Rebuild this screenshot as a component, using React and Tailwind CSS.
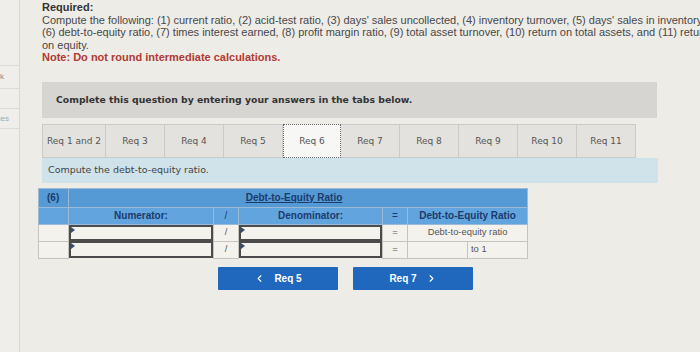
import { ChevronLeft, ChevronRight } from 'lucide-react';

const tabs = ['Req 1 and 2', 'Req 3', 'Req 4', 'Req 5', 'Req 6', 'Req 7', 'Req 8', 'Req 9', 'Req 10', 'Req 11'];

function InputBox() {
    return (
        <div className="relative h-full border-2 border-[#4b4b4b] bg-[#f4f2ed]">
            {/* little marker in the corner */}
            <span className="absolute left-0 top-0 w-0 h-0 border-t-[3px] border-b-[3px] border-l-[4px] border-t-transparent border-b-transparent border-l-[#2b4f85]" />
        </div>
    );
}

export default function App() {
    return (
        <div className="w-[700px] h-[352px] overflow-hidden flex bg-[#eeece7] text-[#333] font-['Liberation_Sans',Arial,sans-serif]">
            {/* Sidebar sliver */}
            <aside className="w-[20px] shrink-0 border-r border-[#d9d7d2] bg-[#efeeea] pt-[65px] flex flex-col">
                <div className="h-[24px] border-y border-[#dddbd6] flex items-center justify-end overflow-hidden text-[8px] text-[#888] whitespace-nowrap pr-[15px]">eBook</div>
                <div className="h-[19px]" />
                <div className="h-[21px] border-y border-[#dddbd6] flex items-center justify-end overflow-hidden text-[8px] text-[#9aa] whitespace-nowrap pr-[10px]">References</div>
            </aside>

            <main className="flex-1 min-w-0 pl-[22px]">
                {/* Instructions */}
                <div className="text-[11px] leading-[12.5px] whitespace-nowrap pt-[1px]">
                    <p className="font-bold">Required:</p>
                    <p className="text-[#484848]">Compute the following: (1) current ratio, (2) acid-test ratio, (3) days' sales uncollected, (4) inventory turnover, (5) days' sales in inventory,</p>
                    <p className="text-[#484848]">(6) debt-to-equity ratio, (7) times interest earned, (8) profit margin ratio, (9) total asset turnover, (10) return on total assets, and (11) return</p>
                    <p className="text-[#484848]">on equity.</p>
                    <p className="font-bold text-[#b03a33]">Note: Do not round intermediate calculations.</p>
                </div>

                {/* Banner */}
                <div className="mt-[18px] w-[615px] h-[36px] bg-[#d6d5d2] flex items-center pl-[14px]">
                    <span className="font-['DejaVu_Sans',sans-serif] font-bold text-[9.3px] text-[#333]">
                        Complete this question by entering your answers in the tabs below.
                    </span>
                </div>

                {/* Tabs */}
                <div className="mt-[6px] flex h-[34px] pt-[2px] font-['DejaVu_Sans',sans-serif] text-[9px] text-[#555]">
                    {tabs.map((t, i) => (
                        <div
                            key={t}
                            className={
                                i === 4
                                    ? 'w-[58px] -mt-[2px] flex items-center justify-center bg-[#f7f7f5] border border-dotted border-[#666]'
                                    : i === 0
                                    ? 'w-[64px] -mt-[2px] flex items-center justify-center bg-[#e3e2de] border border-[#cbcac6]'
                                    : 'w-[59px] -mt-[2px] flex items-center justify-center bg-[#e3e2de] border border-[#cbcac6] border-l-0'
                            }
                        >
                            <span className="pt-[2px]">{t}</span>
                        </div>
                    ))}
                </div>

                {/* Prompt */}
                <div className="w-[616px] h-[25px] bg-[#d0e2ea] flex items-center pl-[6px] font-['DejaVu_Sans',sans-serif] text-[9.5px] text-[#444]">
                    Compute the debt-to-equity ratio.
                </div>

                {/* Ratio table */}
                <table className="mt-[5px] -ml-[4px] border-collapse table-fixed text-[9.4px] font-['Liberation_Sans',Arial,sans-serif]">
                    <colgroup>
                        <col className="w-[30px]" />
                        <col className="w-[145px]" />
                        <col className="w-[25px]" />
                        <col className="w-[144px]" />
                        <col className="w-[25px]" />
                        <col className="w-[60px]" />
                        <col className="w-[60px]" />
                    </colgroup>
                    <tbody>
                        <tr className="h-[19px] bg-[#5599d5] text-[#1b3b6c] font-bold text-[10px]">
                            <td className="border border-[#9cbad5] pl-[8px]">(6)</td>
                            <td colSpan={6} className="border border-[#9cbad5] text-center pr-[8px]">
                                <span className="underline">Debt-to-Equity Ratio</span>
                            </td>
                        </tr>
                        <tr className="h-[17px] bg-[#62a4de] text-[#1b3b6c] font-bold text-center text-[10px]">
                            <td className="border border-[#9cbad5]" />
                            <td className="border border-[#9cbad5]">Numerator:</td>
                            <td className="border border-[#9cbad5] font-normal">/</td>
                            <td className="border border-[#9cbad5]">Denominator:</td>
                            <td className="border border-[#9cbad5] font-normal">=</td>
                            <td colSpan={2} className="border border-[#9cbad5]">Debt-to-Equity Ratio</td>
                        </tr>
                        <tr className="h-[17px] bg-[#f4f2ed] text-[#555] text-center">
                            <td className="border border-[#c6c4bf]" />
                            <td className="p-0 h-[17px]"><InputBox /></td>
                            <td className="border border-[#c6c4bf]">/</td>
                            <td className="p-0 h-[17px]"><InputBox /></td>
                            <td className="border border-[#c6c4bf]">=</td>
                            <td colSpan={2} className="border border-[#c6c4bf]">Debt-to-equity ratio</td>
                        </tr>
                        <tr className="h-[17px] bg-[#f4f2ed] text-[#555] text-center">
                            <td className="border border-[#c6c4bf]" />
                            <td className="p-0 h-[17px]"><InputBox /></td>
                            <td className="border border-[#c6c4bf]">/</td>
                            <td className="p-0 h-[17px]"><InputBox /></td>
                            <td className="border border-[#c6c4bf]">=</td>
                            <td className="border border-[#c6c4bf]" />
                            <td className="border border-[#c6c4bf] text-left pl-[3px]">to 1</td>
                        </tr>
                    </tbody>
                </table>

                {/* Navigation */}
                <div className="mt-[8px] ml-[176px] flex gap-[15px] font-bold text-[10px] text-white">
                    <button className="w-[120px] h-[23px] bg-[#1f68bd] flex items-center justify-center gap-[9px] rounded-[1px]">
                        <ChevronLeft size={11} strokeWidth={2.5} />
                        <span>Req 5</span>
                    </button>
                    <button className="w-[120px] h-[23px] bg-[#1f68bd] flex items-center justify-center gap-[9px] rounded-[1px]">
                        <span>Req 7</span>
                        <ChevronRight size={11} strokeWidth={2.5} />
                    </button>
                </div>
            </main>
        </div>
    );
}
